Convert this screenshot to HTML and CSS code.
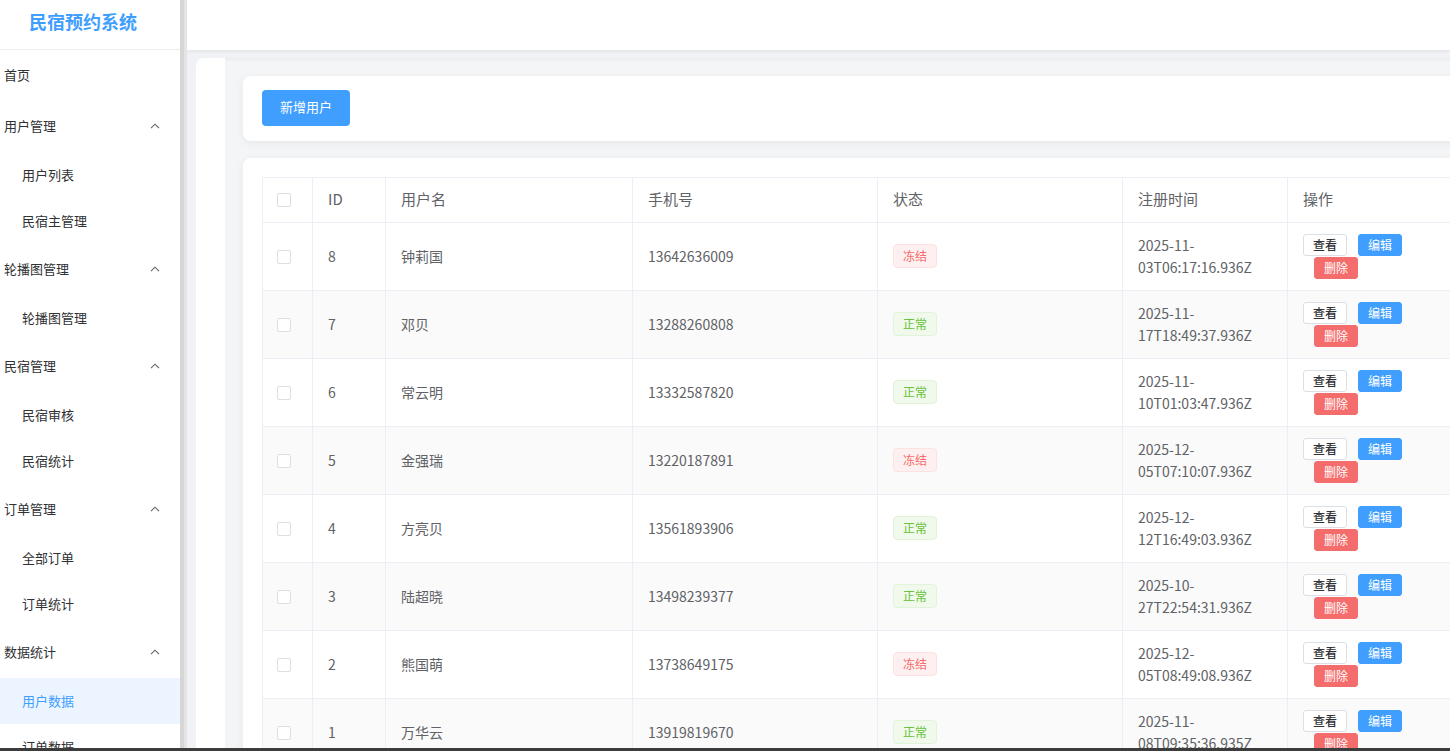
FILE: index.html
```html
<!DOCTYPE html>
<html lang="zh-CN">
<head>
<meta charset="utf-8">
<title>民宿预约系统</title>
<link rel="stylesheet" href="styles.css">
</head>
<body>
<div class="app">
  <aside class="sidebar">
    <div class="logo">民宿预约系统</div>
    <ul class="menu">
      <li class="item">首页</li>
      <li class="title">用户管理<svg class="arrow" viewBox="0 0 10 6"><path d="M1 5.2 L5 1.2 L9 5.2"/></svg></li>
      <li class="sub">用户列表</li>
      <li class="sub">民宿主管理</li>
      <li class="title">轮播图管理<svg class="arrow" viewBox="0 0 10 6"><path d="M1 5.2 L5 1.2 L9 5.2"/></svg></li>
      <li class="sub">轮播图管理</li>
      <li class="title">民宿管理<svg class="arrow" viewBox="0 0 10 6"><path d="M1 5.2 L5 1.2 L9 5.2"/></svg></li>
      <li class="sub">民宿审核</li>
      <li class="sub">民宿统计</li>
      <li class="title">订单管理<svg class="arrow" viewBox="0 0 10 6"><path d="M1 5.2 L5 1.2 L9 5.2"/></svg></li>
      <li class="sub">全部订单</li>
      <li class="sub">订单统计</li>
      <li class="title">数据统计<svg class="arrow" viewBox="0 0 10 6"><path d="M1 5.2 L5 1.2 L9 5.2"/></svg></li>
      <li class="sub active">用户数据</li>
      <li class="sub">订单数据</li>
    </ul>
  </aside>
  <div class="scrollbar"></div>
  <div class="main">
    <header class="header"></header>
    <div class="content">
      <div class="frame">
        <div class="inner">
          <div class="card toolbar">
            <button class="btn-primary">新增用户</button>
          </div>
          <div class="card table-card">
            <table class="table">
              <colgroup>
                <col class="c-check"><col class="c-id"><col class="c-name"><col class="c-phone"><col class="c-status"><col class="c-time"><col class="c-op">
              </colgroup>
              <thead>
                <tr>
                  <th><span class="checkbox"></span></th>
                  <th>ID</th>
                  <th>用户名</th>
                  <th>手机号</th>
                  <th>状态</th>
                  <th>注册时间</th>
                  <th>操作</th>
                </tr>
              </thead>
              <tbody>
                <tr>
                  <td><span class="checkbox"></span></td><td>8</td><td>钟莉国</td><td>13642636009</td>
                  <td><span class="tag tag-danger">冻结</span></td>
                  <td class="time">2025-11-03T06:17:16.936Z</td>
                  <td><div class="ops"><span class="b b-default">查看</span><span class="b b-primary">编辑</span><span class="b b-danger">删除</span></div></td>
                </tr>
                <tr class="stripe">
                  <td><span class="checkbox"></span></td><td>7</td><td>邓贝</td><td>13288260808</td>
                  <td><span class="tag tag-success">正常</span></td>
                  <td class="time">2025-11-17T18:49:37.936Z</td>
                  <td><div class="ops"><span class="b b-default">查看</span><span class="b b-primary">编辑</span><span class="b b-danger">删除</span></div></td>
                </tr>
                <tr>
                  <td><span class="checkbox"></span></td><td>6</td><td>常云明</td><td>13332587820</td>
                  <td><span class="tag tag-success">正常</span></td>
                  <td class="time">2025-11-10T01:03:47.936Z</td>
                  <td><div class="ops"><span class="b b-default">查看</span><span class="b b-primary">编辑</span><span class="b b-danger">删除</span></div></td>
                </tr>
                <tr class="stripe">
                  <td><span class="checkbox"></span></td><td>5</td><td>金强瑞</td><td>13220187891</td>
                  <td><span class="tag tag-danger">冻结</span></td>
                  <td class="time">2025-12-05T07:10:07.936Z</td>
                  <td><div class="ops"><span class="b b-default">查看</span><span class="b b-primary">编辑</span><span class="b b-danger">删除</span></div></td>
                </tr>
                <tr>
                  <td><span class="checkbox"></span></td><td>4</td><td>方亮贝</td><td>13561893906</td>
                  <td><span class="tag tag-success">正常</span></td>
                  <td class="time">2025-12-12T16:49:03.936Z</td>
                  <td><div class="ops"><span class="b b-default">查看</span><span class="b b-primary">编辑</span><span class="b b-danger">删除</span></div></td>
                </tr>
                <tr class="stripe">
                  <td><span class="checkbox"></span></td><td>3</td><td>陆超晓</td><td>13498239377</td>
                  <td><span class="tag tag-success">正常</span></td>
                  <td class="time">2025-10-27T22:54:31.936Z</td>
                  <td><div class="ops"><span class="b b-default">查看</span><span class="b b-primary">编辑</span><span class="b b-danger">删除</span></div></td>
                </tr>
                <tr>
                  <td><span class="checkbox"></span></td><td>2</td><td>熊国萌</td><td>13738649175</td>
                  <td><span class="tag tag-danger">冻结</span></td>
                  <td class="time">2025-12-05T08:49:08.936Z</td>
                  <td><div class="ops"><span class="b b-default">查看</span><span class="b b-primary">编辑</span><span class="b b-danger">删除</span></div></td>
                </tr>
                <tr class="stripe">
                  <td><span class="checkbox"></span></td><td>1</td><td>万华云</td><td>13919819670</td>
                  <td><span class="tag tag-success">正常</span></td>
                  <td class="time">2025-11-08T09:35:36.935Z</td>
                  <td><div class="ops"><span class="b b-default">查看</span><span class="b b-primary">编辑</span><span class="b b-danger">删除</span></div></td>
                </tr>
              </tbody>
            </table>
          </div>
        </div>
      </div>
    </div>
  </div>
</div>
<div class="bottom-bar"></div>
</body>
</html>
```

FILE: styles.css
```css
* { box-sizing: border-box; }
html, body {
  margin: 0;
  padding: 0;
  width: 1450px;
  height: 751px;
  overflow: hidden;
  font-family: "Noto Sans CJK SC", "Noto Sans", "Liberation Sans", sans-serif;
  color: #303133;
  background: #f0f2f5;
}
.app {
  display: flex;
  height: 751px;
  overflow: hidden;
}
.sidebar {
  width: 180px;
  flex: 0 0 180px;
  background: #fff;
  height: 751px;
  overflow: hidden;
}
.scrollbar {
  width: 7px;
  flex: 0 0 7px;
  background: linear-gradient(to right, #d6d6d6 0, #d6d6d6 4px, #e4e4e4 4px, #e4e4e4 7px);
}
.logo {
  height: 50px;
  border-bottom: 1px solid #eeeeee;
  display: flex;
  align-items: center;
  justify-content: center;
  padding-right: 14px;
  padding-bottom: 8px;
  color: #409eff;
  font-size: 18px;
  font-weight: 700;
}
.menu {
  list-style: none;
  margin: 0;
  padding: 0;
}
.menu li {
  display: flex;
  align-items: center;
  font-size: 13px;
  color: #303133;
  white-space: nowrap;
  padding-bottom: 2px;
}
.menu .item, .menu .title {
  height: 51px;
  padding-left: 4px;
}
.menu .title {
  justify-content: space-between;
  padding-right: 20px;
}
.menu .sub {
  height: 46px;
  padding-left: 22px;
}
.menu .active {
  background: #ecf5ff;
  color: #409eff;
}
.arrow {
  width: 10px;
  height: 6px;
  fill: none;
  stroke: #606266;
  stroke-width: 1.1;
}
.main {
  flex: 1 1 auto;
  min-width: 0;
  display: flex;
  flex-direction: column;
  overflow: hidden;
}
.header {
  height: 50px;
  flex: 0 0 50px;
  background: #fff;
  box-shadow: 0 1px 4px rgba(0, 0, 0, 0.08);
  position: relative;
  z-index: 1;
}
.content {
  flex: 1 1 auto;
  padding: 8px 0 0 9px;
  overflow: hidden;
  background: #f0f2f5;
}
.frame {
  width: 1275px;
  height: 100%;
  background: #fff;
  border-radius: 8px 0 0 0;
  padding-left: 29px;
}
.inner {
  height: 100%;
  background: #f4f5f7;
  padding: 18px 0 0 18px;
  box-shadow: inset 0 3px 4px -2px rgba(0, 0, 0, 0.06);
  overflow: hidden;
}
.card {
  width: 1228px;
  background: #fff;
  border-radius: 8px;
  box-shadow: 0 2px 10px rgba(0, 0, 0, 0.06);
}
.toolbar {
  height: 65px;
  padding: 14px 19px;
  margin-bottom: 17px;
}
.btn-primary {
  width: 88px;
  height: 36px;
  border: none;
  border-radius: 4px;
  background: #409eff;
  color: #fff;
  font-family: inherit;
  font-size: 13px;
  padding: 0 0 3px;
  cursor: pointer;
}
.table-card {
  padding: 19px;
  height: 700px;
}
.table {
  width: 1190px;
  table-layout: fixed;
  border-collapse: collapse;
  border: 1px solid #ebeef5;
  font-size: 14px;
  color: #606266;
}
.c-check { width: 50px; }
.c-id { width: 73px; }
.c-name { width: 247px; }
.c-phone { width: 245px; }
.c-status { width: 245px; }
.c-time { width: 165px; }
.c-op { width: 165px; }
.table th, .table td {
  border: 1px solid #ebeef5;
  text-align: left;
  padding: 0 16px 2px 15px;
  vertical-align: middle;
}
.table th:first-child, .table td:first-child {
  padding: 0 0 0 14px;
}
.table th {
  height: 45px;
  font-weight: 400;
  font-size: 15px;
  color: #5f6266;
  padding-bottom: 3px;
}
.table td {
  height: 68px;
}
.table tr.stripe td {
  background: #fafafa;
}
.checkbox {
  display: block;
  width: 14px;
  height: 14px;
  border: 1px solid #dcdfe6;
  border-radius: 2px;
  background: #fff;
}
.time {
  line-height: 22px;
  word-break: normal;
}
.tag {
  display: inline-block;
  height: 24px;
  line-height: 22px;
  padding: 0 9px;
  font-size: 12px;
  border-radius: 4px;
  border: 1px solid;
}
.tag-danger {
  background: #fef0f0;
  border-color: #fde2e2;
  color: #f56c6c;
}
.tag-success {
  background: #f0f9eb;
  border-color: #e1f3d8;
  color: #67c23a;
}
.ops {
  display: flex;
  flex-wrap: wrap;
  row-gap: 1px;
  padding-top: 2px;
}
.b {
  display: inline-block;
  height: 22px;
  line-height: 19px;
  padding: 0 9px;
  font-size: 12px;
  border-radius: 3px;
  border: 1px solid;
  white-space: nowrap;
}
.b + .b { margin-left: 11px; }
.b-default {
  background: #fff;
  border-color: #dcdfe6;
  color: #303133;
  font-weight: 500;
}
.b-primary {
  background: #409eff;
  border-color: #409eff;
  color: #fff;
}
.b-danger {
  background: #f56c6c;
  border-color: #f56c6c;
  color: #fff;
}
.bottom-bar {
  position: fixed;
  left: 0;
  right: 0;
  bottom: 0;
  height: 3px;
  background: #3c3c3c;
}
```
